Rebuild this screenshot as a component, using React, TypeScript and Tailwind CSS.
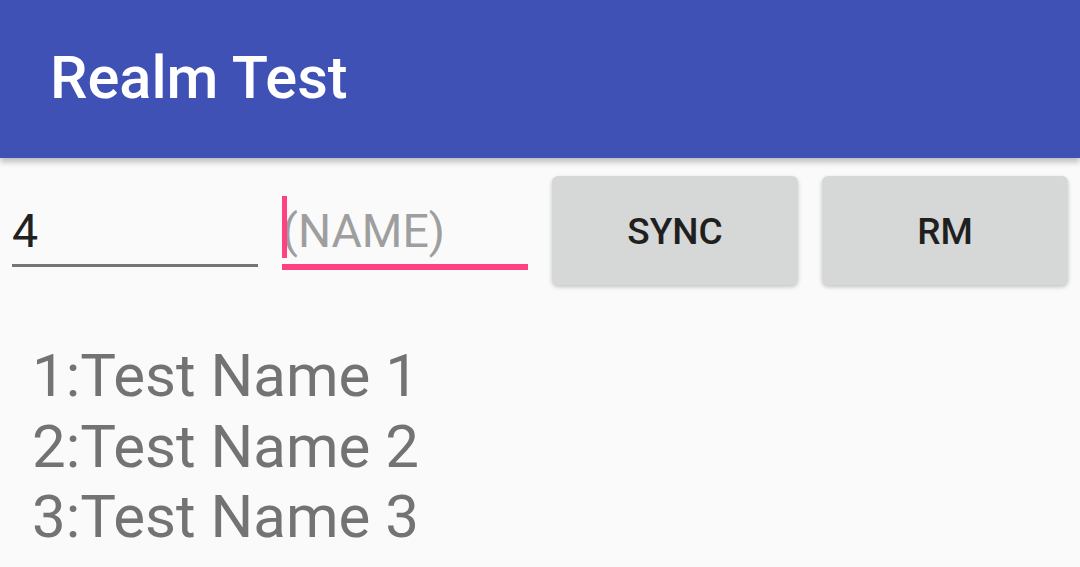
export default function App() {
  const items = ["1:Test Name 1", "2:Test Name 2", "3:Test Name 3"];
  return (
    <div className="w-[1080px] h-[567px] overflow-hidden bg-[#fafafa] font-['Roboto',sans-serif]">
      <header className="relative z-10 h-[158px] bg-[#3f51b5] px-[50px] pt-[49px] shadow-[0_4px_6px_rgba(0,0,0,0.25)]">
        <h1 className="text-[59.5px] leading-none font-medium text-white">Realm Test</h1>
      </header>

      <div className="grid grid-cols-4 gap-[24px] px-[12px] pt-[18px]">
        <div className="flex flex-col">
          <div className="pt-[32px] text-[46.5px] leading-none text-[#212121]">4</div>
          <div className="mt-[9.5px] h-[2.5px] bg-[#757575]" />
        </div>
        <div className="relative flex flex-col">
          <span className="absolute left-0 top-[20px] h-[62px] w-[5px] bg-[#ff4081]" />
          <div className="pt-[32px] text-[46.5px] leading-none text-[#9e9e9e]">(NAME)</div>
          <div className="mt-[9.5px] h-[5.5px] bg-[#ff4081]" />
        </div>
        <button className="h-[109px] rounded-[6px] bg-[#d6d7d7] pt-[3px] text-[37px] font-medium text-[#1f1f1f] shadow-[0_2px_4px_rgba(0,0,0,0.22)]">
          SYNC
        </button>
        <button className="h-[109px] rounded-[6px] bg-[#d6d7d7] pt-[3px] text-[37px] font-medium text-[#1f1f1f] shadow-[0_2px_4px_rgba(0,0,0,0.22)]">
          RM
        </button>
      </div>

      <div className="pl-[32px] pt-[56px]">
        {items.map(t => (
          <div key={t} className="text-[60px] leading-[70.5px] text-[#737373]">
            {t}
          </div>
        ))}
      </div>
    </div>
  );
}
